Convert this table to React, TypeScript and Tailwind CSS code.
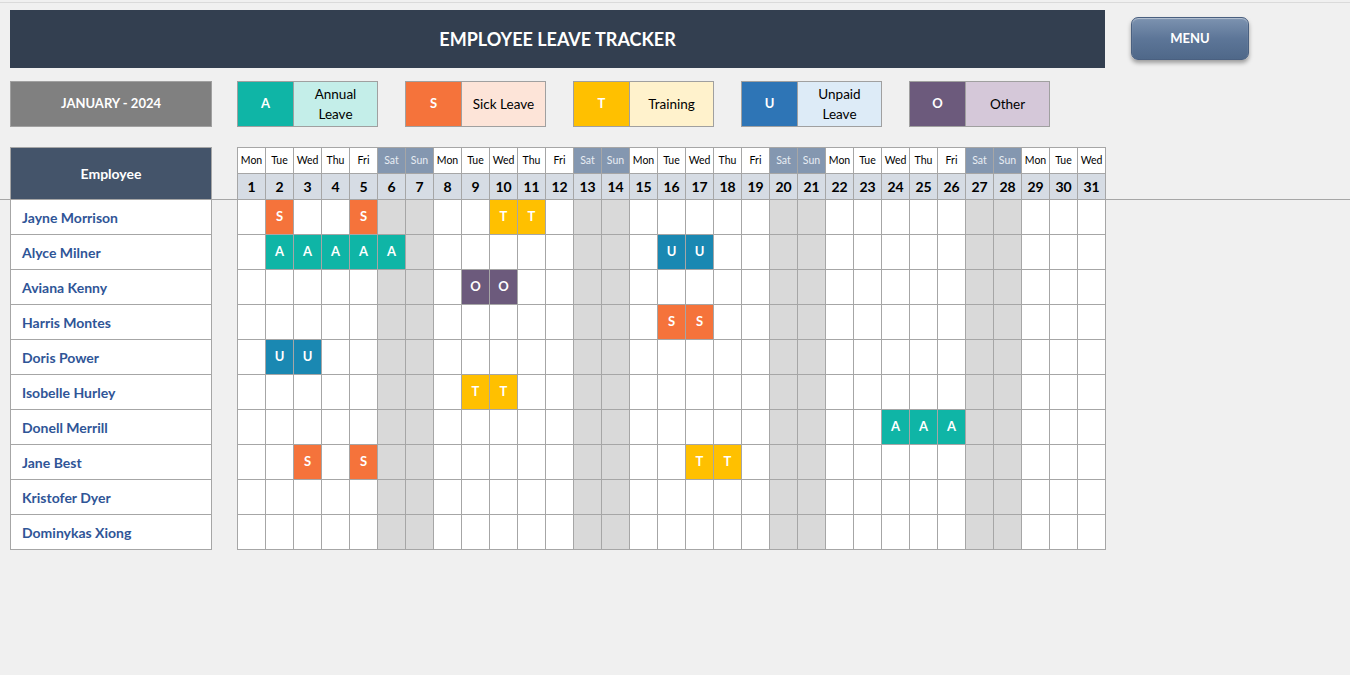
import React from "react";

type Code = "A" | "S" | "T" | "U" | "O";

const legend: { code: Code; label: string[]; dark: string; light: string }[] = [
  { code: "A", label: ["Annual", "Leave"], dark: "bg-[#0fb5a6]", light: "bg-[#c4eee9]" },
  { code: "S", label: ["Sick Leave"], dark: "bg-[#f5733b]", light: "bg-[#fde4d8]" },
  { code: "T", label: ["Training"], dark: "bg-[#ffc000]", light: "bg-[#fff2cc]" },
  { code: "U", label: ["Unpaid", "Leave"], dark: "bg-[#2e75b6]", light: "bg-[#ddebf7]" },
  { code: "O", label: ["Other"], dark: "bg-[#6c5a7c]", light: "bg-[#d5c8d9]" },
];

const cellColor: Record<Code, string> = {
  A: "bg-[#0fb5a6]",
  S: "bg-[#f5733b]",
  T: "bg-[#ffc000]",
  U: "bg-[#1a88b2]",
  O: "bg-[#6c5a7c]",
};

const employees: { name: string; leave: Record<number, Code> }[] = [
  { name: "Jayne Morrison", leave: { 2: "S", 5: "S", 10: "T", 11: "T" } },
  { name: "Alyce Milner", leave: { 2: "A", 3: "A", 4: "A", 5: "A", 6: "A", 16: "U", 17: "U" } },
  { name: "Aviana Kenny", leave: { 9: "O", 10: "O" } },
  { name: "Harris Montes", leave: { 16: "S", 17: "S" } },
  { name: "Doris Power", leave: { 2: "U", 3: "U" } },
  { name: "Isobelle Hurley", leave: { 9: "T", 10: "T" } },
  { name: "Donell Merrill", leave: { 24: "A", 25: "A", 26: "A" } },
  { name: "Jane Best", leave: { 3: "S", 5: "S", 17: "T", 18: "T" } },
  { name: "Kristofer Dyer", leave: {} },
  { name: "Dominykas Xiong", leave: {} },
];

const weekdays = ["Mon", "Tue", "Wed", "Thu", "Fri", "Sat", "Sun"];
const days = Array.from({ length: 31 }, (_, i) => i + 1);
const isWeekend = (d: number) => (d - 1) % 7 >= 5;

export default function App() {
  return (
    <div className="w-[1350px] h-[675px] bg-[#f0f0f0] font-['Lato','Liberation_Sans',sans-serif] text-black overflow-hidden">
      <div className="h-[2px]" />
      <div className="border-t border-[#dadada]" />

      {/* title + menu */}
      <div className="flex items-start pl-[10px] mt-[7px]">
        <div className="w-[1095px] h-[58px] bg-[#333f50] flex items-center justify-center text-white font-bold text-[18px]">
          EMPLOYEE LEAVE TRACKER
        </div>
        <button className="ml-[26px] mt-[7px] w-[118px] h-[43px] rounded-[7px] bg-gradient-to-b from-[#7d93b0] via-[#5d7698] to-[#4f6889] border border-[#4a6080] shadow-[0_3px_4px_rgba(0,0,0,0.35),inset_0_1px_1px_rgba(255,255,255,0.45)] text-white font-bold text-[13px] flex items-center justify-center">
          MENU
        </button>
      </div>

      {/* month + legend */}
      <div className="flex pl-[10px] mt-[13px]">
        <div className="w-[202px] h-[46px] bg-[#808080] border border-[#a0a0a0] flex items-center justify-center text-white font-bold text-[13px]">
          JANUARY - 2024
        </div>
        <div className="flex ml-[25px] gap-[27px]">
          {legend.map((l) => (
            <div key={l.code} className="w-[141px] h-[46px] flex border border-[#a0a0a0]">
              <div className={`w-[56px] ${l.dark} border-r border-[#a0a0a0] flex items-center justify-center text-white font-bold text-[13px]`}>
                {l.code}
              </div>
              <div className={`flex-1 ${l.light} flex flex-col items-center justify-center text-[13.5px] leading-[20px]`}>
                {l.label.map((t) => (
                  <span key={t}>{t}</span>
                ))}
              </div>
            </div>
          ))}
        </div>
      </div>

      {/* table header */}
      <div className="flex pl-[10px] mt-[20px] border-b border-[#a6a6a6]">
        <div className="w-[202px] h-[52px] bg-[#44546a] border border-b-0 border-[#a6a6a6] flex items-center justify-center text-white font-bold text-[14px]">
          Employee
        </div>
        <div className="ml-[25px] border-l border-t border-[#a6a6a6] grid grid-cols-[repeat(31,28px)] grid-rows-[26px_25px]">
          {days.map((d) => (
            <div
              key={"n" + d}
              className={`border-r border-b border-[#a6a6a6] flex items-center justify-center text-[10.5px] ${
                isWeekend(d) ? "bg-[#8497b0] text-[#e8edf3]" : "bg-white"
              }`}
            >
              {weekdays[(d - 1) % 7]}
            </div>
          ))}
          {days.map((d) => (
            <div
              key={"d" + d}
              className="border-r border-[#a6a6a6] bg-[#d6dce4] flex items-center justify-center font-bold text-[14px]"
            >
              {d}
            </div>
          ))}
        </div>
      </div>

      {/* rows */}
      <div className="flex pl-[10px]">
        <div className="w-[202px] border-l border-r border-[#a6a6a6] bg-white">
          {employees.map((e) => (
            <div key={e.name} className="h-[35px] border-b border-[#a6a6a6] flex items-center pl-[11px] text-[#2f5597] font-bold text-[14px]">
              {e.name}
            </div>
          ))}
        </div>
        <div className="ml-[25px] border-l border-[#a6a6a6] grid grid-cols-[repeat(31,28px)] auto-rows-[35px]">
          {employees.map((e) =>
            days.map((d) => {
              const c = e.leave[d];
              const bg = c ? cellColor[c] : isWeekend(d) ? "bg-[#d9d9d9]" : "bg-white";
              return (
                <div
                  key={e.name + d}
                  className={`border-r border-b border-[#a6a6a6] ${bg} flex items-center justify-center text-white font-bold text-[13px]`}
                >
                  {c}
                </div>
              );
            })
          )}
        </div>
      </div>
    </div>
  );
}
